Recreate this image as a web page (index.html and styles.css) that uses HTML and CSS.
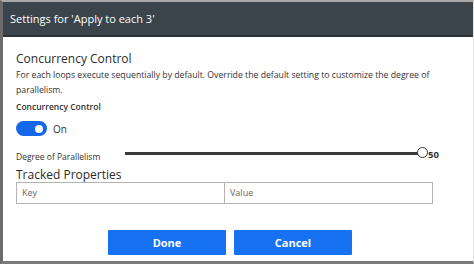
FILE: index.html
```html
<!DOCTYPE html>
<html>
<head>
<meta charset="utf-8">
<link rel="stylesheet" href="styles.css">
</head>
<body>
<div class="frame">
  <div class="header">Settings for 'Apply to each 3'</div>
  <div class="body">
    <div class="title">Concurrency Control</div>
    <div class="desc">For each loops execute sequentially by default. Override the default setting to customize the degree of parallelism.</div>
    <div class="label">Concurrency Control</div>
    <div class="toggle-row">
      <span class="toggle"><span class="knob"></span></span>
      <span class="on">On</span>
    </div>
    <div class="slider-row">
      <span class="slabel">Degree of Parallelism</span>
      <span class="track"><span class="thumb"></span></span>
      <span class="val">50</span>
    </div>
    <div class="title tp">Tracked Properties</div>
    <div class="inputs">
      <div class="inp">Key</div>
      <div class="inp">Value</div>
    </div>
    <div class="buttons">
      <button class="btn">Done</button>
      <button class="btn">Cancel</button>
    </div>
  </div>
</div>
</body>
</html>
```
FILE: styles.css
```css
html, body {
  margin: 0;
  padding: 0;
  background: #ffffff;
}
body {
  width: 474px;
  height: 264px;
  overflow: hidden;
  font-family: "Open Sans", "Noto Sans", sans-serif;
  color: #323130;
}
.frame {
  height: 264px;
  box-sizing: border-box;
  border-top: 2px solid #a9a9a9;
  border-left: 3px solid #6b6b6b;
  border-bottom: 3px solid #7a7a7a;
  border-right: 1px solid #e4e4e4;
  display: flex;
  flex-direction: column;
}
.header {
  height: 33px;
  background: #3b434b;
  border-bottom: 2px solid #2c3238;
  color: #ffffff;
  font-size: 11px;
  line-height: 33px;
  padding-left: 7px;
  flex: none;
}
.body {
  padding: 13px 0 0 13px;
  display: flex;
  flex-direction: column;
}
.title {
  font-size: 12px;
  line-height: 18px;
  color: #2b2b2b;
}
.desc {
  font-size: 8.7px;
  line-height: 15px;
  margin-top: 0;
  width: 440px;
  color: #333;
}
.label {
  font-size: 8.5px;
  font-weight: 600;
  line-height: 14px;
  margin-top: 2px;
}
.toggle-row {
  display: flex;
  align-items: center;
  gap: 6px;
  margin-top: 7px;
  height: 15px;
}
.toggle {
  width: 31px;
  height: 15px;
  border-radius: 8px;
  background: #1467e8;
  position: relative;
  display: inline-block;
}
.knob {
  position: absolute;
  right: 4px;
  top: 3.5px;
  width: 8px;
  height: 8px;
  border-radius: 50%;
  background: #fff;
}
.on {
  font-size: 10px;
}
.slider-row {
  display: flex;
  align-items: center;
  margin-top: 13px;
  height: 12px;
}
.slabel {
  font-size: 8.5px;
  width: 109px;
  flex: none;
  margin-top: 2px;
}
.track {
  width: 297px;
  height: 3px;
  background: #3a3a3a;
  position: relative;
  margin-top: -3px;
}
.thumb {
  position: absolute;
  right: -6px;
  top: -5px;
  width: 11px;
  height: 11px;
  border: 1.5px solid #333;
  border-radius: 50%;
  background: #fff;
  box-sizing: border-box;
}
.val {
  font-size: 9.5px;
  font-weight: 700;
  margin-left: 6px;
  margin-top: -1px;
}
.tp {
  margin-top: 7px;
  line-height: 14px;
}
.inputs {
  display: flex;
  margin-top: 0;
}
.inp {
  width: 209px;
  height: 22px;
  box-sizing: border-box;
  border: 1px solid #b3b3b3;
  font-size: 9px;
  color: #666;
  line-height: 20px;
  padding-left: 5px;
}
.inp + .inp {
  width: 208px;
  border-left: none;
}
.buttons {
  display: flex;
  gap: 8px;
  margin-top: 26px;
  padding-left: 92px;
}
.btn {
  width: 118px;
  height: 25px;
  border: none;
  border-radius: 1px;
  background: #1672f3;
  color: #fff;
  font-family: "Open Sans", "Noto Sans", sans-serif;
  font-weight: 700;
  font-size: 11px;
  padding: 0;
}
```
